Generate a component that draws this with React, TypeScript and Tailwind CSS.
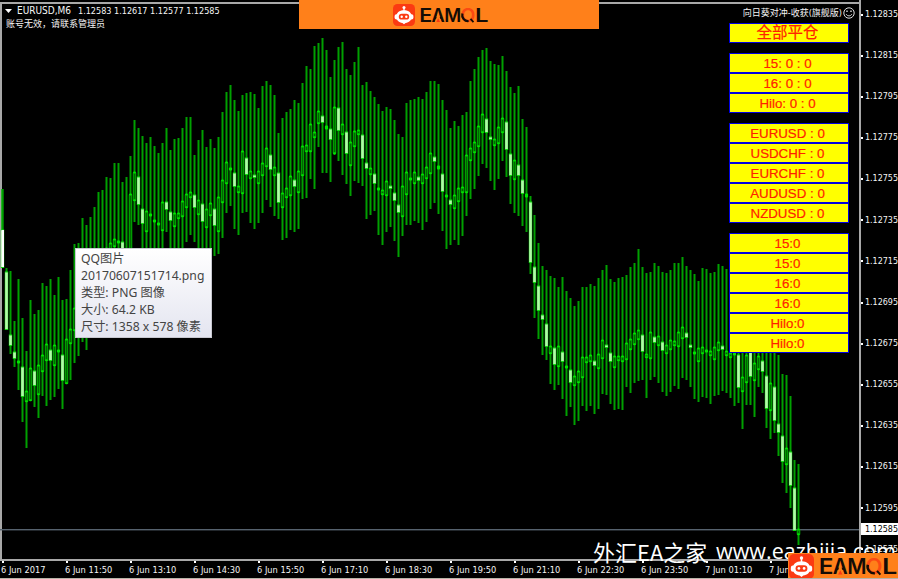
type Candle = [high: number, top: number, bottom: number, low: number, kind: string]

// one candle per 4px, values are chart pixels: high, body top, body bottom, low
// w = falling (filled), h = rising (hollow), d = doji
const SERIES = `
189 230 267 267 w|268 272 329 330 w|271 335 345 354 w|321 352 358 367 w|279 361 363 390 d|318 367 396 422 w|351 391 401 448 h|300 368 400 400 h|314 371 385 407 w|310 365 394 418 h
283 355 371 396 h|286 344 360 406 h|279 350 360 400 w|295 345 365 397 h|277 350 352 389 d|300 355 380 409 w|299 339 383 383 h|270 329 343 380 h|244 308 330 363 h|243 300 310 356 h
218 290 310 342 h|225 280 300 350 w|217 270 290 337 h|207 262 280 320 h|192 256 270 310 h|190 250 262 300 h|177 248 256 300 h|178 243 249 300 h|163 239 246 300 h|163 241 243 300 d
182 242 250 300 w|177 249 260 300 h|156 194 249 249 h|120 172 200 222 h|128 177 204 225 w|136 209 223 260 w|143 211 231 260 h|137 214 216 260 d|146 220 222 260 d|153 223 225 260 d
143 202 230 260 h|128 202 209 232 w|150 212 220 260 w|139 213 226 260 h|138 213 218 260 h|128 201 216 260 h|117 194 207 242 h|117 192 197 235 h|155 195 207 242 w|140 200 214 260 h
130 204 221 260 w|147 209 227 260 h|139 203 215 260 h|148 209 225 256 w|137 197 231 254 h|112 180 202 238 h|92 162 183 213 h|85 168 170 206 d|100 173 186 229 w|111 186 192 235 h
95 151 193 213 h|93 158 174 212 w|92 171 178 223 h|94 175 177 229 w|108 171 183 223 h|86 163 175 213 h|81 148 166 200 h|85 155 169 207 w|95 167 175 216 h|133 173 202 219 w
118 193 207 240 h|112 188 197 238 h|109 176 195 230 h|100 180 186 232 w|103 171 192 229 h|83 146 175 199 h|66 145 151 198 h|69 124 151 179 h|46 132 137 189 h|43 111 123 147 h
38 116 122 173 w|50 126 129 173 d|77 129 139 182 w|60 107 153 155 h|47 108 130 161 w|42 124 134 175 h|69 132 153 184 w|75 142 165 196 h|62 131 146 181 h|47 130 134 183 h
85 135 158 186 w|82 163 168 219 w|91 168 174 215 h|97 174 183 211 w|104 188 190 235 d|111 190 194 245 h|107 181 195 232 h|109 186 188 227 w|120 193 200 241 w|134 205 212 257 w
137 186 216 236 h|103 172 194 225 h|100 178 180 225 d|99 172 183 221 h|97 177 180 223 w|99 174 183 230 h|92 167 178 222 h|81 153 173 209 h|81 157 161 203 w|84 166 169 214 d
100 174 191 231 w|110 195 197 249 d|128 200 204 245 w|121 195 208 240 h|126 188 201 245 h|115 187 192 236 h|112 155 192 216 h|81 148 160 199 h|69 142 152 189 h|57 126 146 176 h
50 114 132 164 h|48 119 132 168 w|61 137 139 181 w|64 139 145 190 h|65 127 143 179 h|56 118 132 161 h|71 122 149 177 w|87 154 175 204 w|93 160 179 213 h|86 165 175 216 w
119 180 193 226 w|127 194 197 232 d|196 202 262 274 w|215 267 282 318 w|243 286 310 339 w|266 315 319 355 w|270 324 346 360 w|276 346 353 384 h|278 348 364 390 w|287 346 366 385 h
277 352 361 399 w|291 366 368 416 d|298 370 382 407 w|306 376 385 425 h|301 371 382 421 h|287 357 377 406 h|287 357 362 411 h|284 355 361 406 h|286 361 365 414 w|278 354 368 409 h
270 340 358 394 h|265 345 347 395 w|279 353 361 404 w|282 356 367 410 h|278 356 360 409 h|277 356 361 410 h|275 343 359 387 h|267 339 349 393 h|263 333 344 383 h|249 330 339 381 h
267 335 351 380 w|273 354 357 398 h|272 332 358 380 h|263 337 342 377 w|266 336 345 383 h|272 342 350 392 w|273 345 353 396 h|270 340 349 392 h|263 341 345 386 h|263 332 346 389 h
257 327 338 378 h|266 333 337 380 w|270 345 347 387 w|274 352 354 399 d|281 348 361 402 h|268 347 353 397 h|269 350 352 398 d|273 351 355 404 h|272 347 359 396 h|264 342 350 395 h
266 346 349 391 w|269 351 355 393 h|270 353 357 398 h|272 353 355 406 d|270 355 387 403 w|270 377 391 429 h|270 355 382 405 h|270 350 376 405 w|275 363 380 417 h|280 356 369 387 h
290 361 371 393 w|300 376 408 428 w|330 383 410 439 h|345 387 420 433 w|355 424 432 456 w|374 436 461 483 w|375 448 464 493 h|396 452 485 508 w|460 488 530 530 w|464 529 534 545 h`

const candles: Candle[] = SERIES.trim()
  .split(/[|\n]/)
  .map((row) => {
    const [high, top, bottom, low, kind] = row.trim().split(' ')
    return [+high, +top, +bottom, +low, kind]
  })

const prices = [
  '1.12835', '1.12815', '1.12795', '1.12775', '1.12755', '1.12735', '1.12715',
  '1.12695', '1.12675', '1.12655', '1.12635', '1.12615', '1.12595', '1.12575',
]

const times = [
  '6 Jun 2017', '6 Jun 11:50', '6 Jun 13:10', '6 Jun 14:30', '6 Jun 15:50', '6 Jun 17:10', '6 Jun 18:30',
  '6 Jun 19:50', '6 Jun 21:10', '6 Jun 22:30', '6 Jun 23:50', '7 Jun 01:10', '7 Jun 02:30',
]

const buttonGroups = [
  ['全部平仓'],
  ['15: 0 : 0', '16: 0 : 0', 'Hilo: 0 : 0'],
  ['EURUSD : 0', 'USDCHF : 0', 'EURCHF : 0', 'AUDUSD : 0', 'NZDUSD : 0'],
  ['15:0', '15:0', '16:0', '16:0', 'Hilo:0', 'Hilo:0'],
]

function CandleShape({ candle, x }: { candle: Candle; x: number }) {
  const [high, top, bottom, low, kind] = candle
  return (
    <g>
      <rect x={x - 1} y={high} width={2} height={low - high} fill="#00a000" />
      {kind === 'h' && (
        <>
          <rect x={x - 1.8} y={top} width={3.6} height={bottom - top + 1} rx={1} fill="#009c00" />
          <rect x={x - 0.5} y={top + 1} width={1} height={Math.max(bottom - top - 1, 0)} fill="#006800" />
          <rect x={x - 1.4} y={top - 0.5} width={2.8} height={2} rx={1} fill="#00e400" />
          <rect x={x - 1.4} y={bottom - 0.7} width={2.8} height={2} rx={1} fill="#00e400" />
        </>
      )}
      {kind === 'w' && (
        <>
          <rect x={x - 1.7} y={top - 0.5} width={3.4} height={bottom - top + 1.5} fill="#10dc10" />
          <rect x={x - 1.3} y={top + 0.5} width={2.6} height={Math.max(bottom - top - 0.5, 1)} fill="#b4f8aa" />
        </>
      )}
      {kind === 'd' && <rect x={x - 1.6} y={top - 0.4} width={3.2} height={bottom - top + 0.8} rx={1} fill="#00e400" />}
    </g>
  )
}

function Chart() {
  return (
    <svg className="absolute inset-0" width={860} height={561} viewBox="0 0 860 561">
      <rect x={0} y={529} width={860} height={1.4} fill="#56626e" />
      <rect x={1.5} y={189} width={1.8} height={42} fill="#00e000" />
      {candles.map((candle, i) => (
        <CandleShape key={i} candle={candle} x={2.5 + i * 4} />
      ))}
      <rect x={1.5} y={230} width={2.5} height={37} fill="#fff" />
    </svg>
  )
}

function Logo({ className }: { className: string }) {
  return (
    <svg className={className} viewBox="0 0 96 22">
      <rect width={22} height={22} rx={4.5} fill="#fb3a12" />
      <circle cx={11} cy={3.5} r={1.5} fill="#fff" />
      <path d="M11 4v4" stroke="#fff" strokeWidth={1.3} />
      <rect x={1.6} y={10.2} width={4} height={5.4} rx={1.8} fill="#fff" />
      <rect x={16.4} y={10.2} width={4} height={5.4} rx={1.8} fill="#fff" />
      <path d="M11 6.3c5 0 7.6 2.6 7.6 6.4 0 3.600-2.600 5.800-6 6.200L11 20.300l-1.600-1.400c-3.400-.4-6-2.600-6-6.200 0-3.800 2.600-6.400 7.600-6.400z" fill="#fff" />
      <rect x={5.8} y={9.8} width={10.4} height={5.8} rx={2.9} fill="#fb3a12" />
      <circle cx={8.7} cy={12.7} r={1.2} fill="#fff" />
      <circle cx={13.3} cy={12.7} r={1.2} fill="#fff" />
      <g fill="#140c06" fontSize={19} fontWeight={600} fontFamily='Inter, "Open Sans", sans-serif'>
        <text x={26.3} y={18} textLength={13} lengthAdjust="spacingAndGlyphs">E</text>
        <text x={38.6} y={18} textLength={13.2} lengthAdjust="spacingAndGlyphs">A</text>
        <text x={51.2} y={18} textLength={17} lengthAdjust="spacingAndGlyphs">M</text>
        <text x={67.4} y={18} textLength={15} lengthAdjust="spacingAndGlyphs" fill="#fb4a12">O</text>
        <text x={82} y={18} textLength={13.5} lengthAdjust="spacingAndGlyphs">L</text>
      </g>
      {/* open A: the crossbar is replaced by a small wedge */}
      <path d="M45.200 8.800l3.300 9.400h-6.600z" fill="#ff801a" />
      <path d="M45.200 14.300l1.900 3.700h-3.800z" fill="#fb3a12" />
      <path d="M69.400 9.500a5.800 6 0 0 0 6.200 7.500" fill="none" stroke="#140c06" strokeWidth={2.200} />
      <path d="M77.500 14.800l3 3.400" stroke="#140c06" strokeWidth={1.800} />
    </svg>
  )
}

function ButtonPanel() {
  return (
    <div className="absolute left-[729px] top-[23px] flex w-[120px] flex-col gap-2.5 font-['Liberation_Sans','Noto_Sans_CJK_SC',sans-serif]">
      {buttonGroups.map((group, i) => (
        <div key={i} className="flex flex-col">
          {group.map((label, j) => (
            <button
              key={j}
              className={`h-5 border border-[#0000e0] bg-[#ffff00] pr-[3px] text-center text-[#ff2200] [-webkit-text-stroke:0.2px_#ff2200] ${
                i === 0 ? 'text-[15.5px] leading-[18px]' : 'text-[13.3px] leading-[19px]'
              }`}
            >
              {label}
            </button>
          ))}
        </div>
      ))}
    </div>
  )
}

function FileTooltip() {
  return (
    <div className="absolute left-[75px] top-[248px] h-[90px] w-[137px] border border-[#c8c8d0] bg-linear-to-b from-white to-[#e4e5f0] pl-[5px] pt-px font-['Noto_Sans','Noto_Sans_CJK_SC',sans-serif] text-[12.2px] leading-[17px] whitespace-nowrap text-[#444]">
      <p>QQ图片</p>
      <p>20170607151714.png</p>
      <p>类型: PNG 图像</p>
      <p>大小: 64.2 KB</p>
      <p>尺寸: 1358 x 578 像素</p>
    </div>
  )
}

function PriceAxis() {
  return (
    <div className="relative w-[39px] border-l-2 border-[#a8a8a8] text-[8.9px]">
      <div className="-mt-[6px] flex flex-col">
        {prices.map((price) => (
          <div key={price} className="flex h-[41.15px] items-center">
            <span className="h-[2px] w-[2px] bg-white" />
            <span className="ml-[2px]">{price}</span>
          </div>
        ))}
      </div>
      <div className="absolute left-0 top-[523px] h-[12px] w-[38px] bg-white pl-[4px] leading-[12px] text-black">1.12585</div>
    </div>
  )
}

export default function App() {
  return (
    <div className="relative flex h-[579px] w-[898px] flex-col overflow-hidden border-b border-[#b8b4a8] bg-black font-['DejaVu_Sans_Condensed','DejaVu_Sans','Noto_Sans_CJK_SC',sans-serif] text-[9.2px] whitespace-nowrap text-[#f4f4f4]">
      <div className="flex h-[561px]">
        <div className="relative w-[859px]">
          <div className="absolute inset-x-0 bottom-0 top-[2px] border-l-2 border-t-2 border-b-2 border-[#a8a8a8]" />
          <Chart />
          <div className="relative flex justify-between pl-[5px] pr-[4px] pt-[5px] leading-[12px]">
            <div>
              <div className="flex items-center">
                <svg width={7} height={4} viewBox="0 0 7 4">
                  <path d="M0 0h7L3.5 4z" fill="#fff" />
                </svg>
                <span className="ml-[5px] w-[61px] text-[10px]">EURUSD,M6</span>
                <span className="text-[9px]">1.12583 1.12617 1.12577 1.12585</span>
              </div>
              <p className="ml-px text-[9px] leading-[14px]">账号无效，请联系管理员</p>
            </div>
            <div className="flex h-[15px] items-center text-[9px]">
              向日葵对冲-收获(旗舰版)
              <svg className="ml-px" width={12} height={12} viewBox="0 0 12 12" fill="none" stroke="#ddd">
                <circle cx={6} cy={6} r={5.2} />
                <path d="M3.2 7.2c1.2 2.2 4.4 2.2 5.6 0" />
                <path d="M4 3.5v1.5M8 3.5v1.5" strokeWidth={1.4} />
              </svg>
            </div>
          </div>
          <ButtonPanel />
          <FileTooltip />
        </div>
        <PriceAxis />
      </div>

      <div className="flex pl-px">
        {times.map((time) => (
          <div key={time} className="w-16 shrink-0">
            <div className="ml-px h-[2px] w-[2px] bg-white" />
            <p className="leading-[13px]">{time}</p>
          </div>
        ))}
      </div>

      <div className="absolute left-[299px] top-0 flex h-[29px] w-[300px] items-center bg-[#ff801a] pl-[94px]">
        <Logo className="h-[22px] w-[96px]" />
      </div>

      <div className="absolute left-[593px] top-[537px] flex text-[22px] leading-[28px] text-white">
        <span className="w-[123px] font-['Noto_Sans_CJK_SC',sans-serif]">外汇EA之家</span>
        <span className="font-['Open_Sans',sans-serif] text-[21.5px]">www.eazhijia.com</span>
      </div>
      <div className="absolute left-[788px] top-[553px] flex h-[26px] w-[110px] items-center bg-[#ff801a] pl-px">
        <Logo className="h-[25px] w-[109px]" />
      </div>
    </div>
  )
}
